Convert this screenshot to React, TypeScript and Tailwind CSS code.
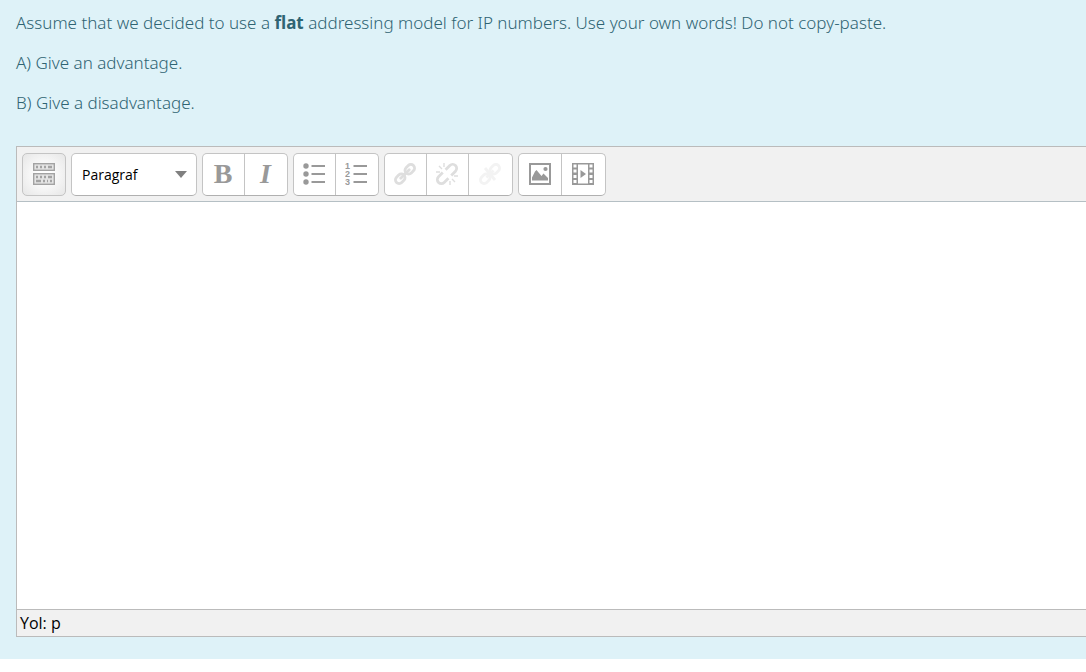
import type { ReactNode } from 'react';

interface ToolButtonProps {
  label: string;
  children: ReactNode;
  disabled?: boolean;
  wide?: boolean;
}

function ToolGroup({ children }: { children: ReactNode }) {
  return (
    <div className="flex h-[43px] overflow-hidden rounded-[5px] border border-[#c4c4c4] border-b-[#b0b0b0] bg-white">
      {children}
    </div>
  );
}

function ToolButton({ label, children, disabled, wide }: ToolButtonProps) {
  return (
    <button
      type="button"
      aria-label={label}
      title={label}
      disabled={disabled}
      className={`flex items-center justify-center border-r border-[#c4c4c4] pr-px pb-0.5 text-[#999] last:border-r-0 ${
        wide ? 'w-[43px]' : 'w-[42px]'
      }`}
    >
      {children}
    </button>
  );
}

function Icon({ children, className }: { children: ReactNode; className?: string }) {
  return (
    <svg
      width="24"
      height="24"
      viewBox="0 0 24 24"
      fill="none"
      stroke="currentColor"
      aria-hidden="true"
      className={className}
    >
      {children}
    </svg>
  );
}

function KeyboardIcon() {
  return (
    <Icon>
      <rect x="1.7" y="1.7" width="20.6" height="6.6" strokeWidth="1.4" fill="#e4e4e4" />
      <rect x="1.7" y="11.7" width="20.6" height="10.6" strokeWidth="1.4" fill="#e4e4e4" />
      <path d="M4 5h2M8 5h2M12 5h2M16 5h4" strokeWidth="2.4" />
      <path d="M4 15h2M8 15h2M12 15h2M16 15h4" strokeWidth="2.4" />
      <path d="M4 19h5M11 19h2M15 19h1M18 19h2" strokeWidth="2.4" />
    </Icon>
  );
}

function BulletListIcon() {
  return (
    <Icon>
      {[4, 12, 20].map((y) => (
        <g key={y}>
          <circle cx="4" cy={y} r="2.7" fill="currentColor" stroke="none" />
          <path d={`M9.5 ${y}h13.5`} strokeWidth="2.2" />
        </g>
      ))}
    </Icon>
  );
}

function NumberListIcon() {
  return (
    <Icon>
      {[4, 12, 20].map((y, i) => (
        <g key={y}>
          <text
            x="0"
            y={y + 3}
            fontSize="9"
            fontWeight="700"
            fontFamily="Liberation Sans, sans-serif"
            fill="currentColor"
            stroke="none"
          >
            {i + 1}
          </text>
          <path d={`M8.5 ${y}h13.5`} strokeWidth="2.2" />
        </g>
      ))}
    </Icon>
  );
}

function LinkIcon() {
  return (
    <Icon className="text-[#dedede]">
      <g transform="translate(12 12) rotate(-45)">
        <rect x="-12" y="-3.7" width="10.5" height="7.4" rx="3.7" strokeWidth="2.8" />
        <rect x="1.5" y="-3.7" width="10.5" height="7.4" rx="3.7" strokeWidth="2.8" />
        <path d="M-6 0h12" strokeWidth="2.8" strokeLinecap="round" />
      </g>
    </Icon>
  );
}

function UnlinkIcon() {
  return (
    <Icon className="text-[#dedede]">
      <g transform="translate(12 12) rotate(-45)">
        <path d="M-2 -4h-6a4 4 0 0 0 0 8h6" strokeWidth="2.8" />
        <path d="M2 -4h6a4 4 0 0 1 0 8h-6" strokeWidth="2.8" />
      </g>
      <path d="M9 1v4M4 4l3 3M1 10h4M15 23v-4M20 20l-3-3M23 14h-4" strokeWidth="1.4" />
    </Icon>
  );
}

function NoAutoLinkIcon() {
  return (
    <Icon className="text-[#f3f3f3]">
      <g transform="translate(12 12) rotate(-45)">
        <rect x="-12" y="-3.7" width="10.5" height="7.4" rx="3.7" strokeWidth="2.8" />
        <rect x="1.5" y="-3.7" width="10.5" height="7.4" rx="3.7" strokeWidth="2.8" />
        <path d="M-5 0h10" strokeWidth="2.8" />
      </g>
      <path d="M7 6l10 12" strokeWidth="2.8" />
    </Icon>
  );
}

function ImageIcon() {
  return (
    <Icon>
      <rect x="2" y="2" width="20" height="20" strokeWidth="2" />
      <circle cx="17.5" cy="7" r="2.1" fill="currentColor" stroke="none" />
      <path
        d="M4 18.5v-3l3-6 1.5-1.5 5 6 2-2.5 4.5 4.5v2.5z"
        fill="currentColor"
        stroke="none"
      />
    </Icon>
  );
}

function MediaIcon() {
  return (
    <Icon>
      <path
        fillRule="evenodd"
        fill="currentColor"
        stroke="none"
        d="M1 1h22v22h-22zM7 2.5h10v19h-10zM2.5 2.5h3v3h-3zM2.5 7.5h3v3h-3zM2.5 13h3v3h-3zM2.5 18h3v3h-3zM18.5 2.5h3v3h-3zM18.5 7.5h3v3h-3zM18.5 13h3v3h-3zM18.5 18h3v3h-3z"
      />
      <path d="M9.5 8v8l5.5-4z" fill="currentColor" stroke="none" />
    </Icon>
  );
}

function Toolbar() {
  return (
    <div
      role="toolbar"
      aria-label="Editor"
      className="flex flex-wrap gap-[5px] border-b border-[#b5bfc4] bg-[#f1f1f1] px-[5px] pt-1.5 pb-[5px]"
    >
      <button
        type="button"
        aria-label="Toolbar"
        aria-pressed="true"
        className="flex h-[43px] w-11 items-center justify-center rounded-[5px] border border-[#c4c4c4] bg-[radial-gradient(#fff_20%,#e6e6e6)] pb-0.5 text-[#a3a3a3]"
      >
        <KeyboardIcon />
      </button>

      <div className="relative h-[43px] w-[126px]">
        <select
          aria-label="Format"
          defaultValue="p"
          className="h-full w-full appearance-none rounded-[5px] border border-[#c4c4c4] border-b-[#b0b0b0] bg-white pl-2.5 text-sm text-black"
        >
          <option value="p">Paragraf</option>
        </select>
        <svg
          width="12"
          height="7"
          viewBox="0 0 12 7"
          aria-hidden="true"
          className="pointer-events-none absolute top-[18px] right-2.5 fill-[#808080]"
        >
          <path d="M0 0h12L6 7z" />
        </svg>
      </div>

      <ToolGroup>
        <ToolButton label="Bold">
          <span className="font-['Liberation_Serif',serif] text-[28px] leading-7 font-bold">B</span>
        </ToolButton>
        <ToolButton label="Italic">
          <span className="font-['Liberation_Serif',serif] text-[28px] leading-7 font-bold italic">I</span>
        </ToolButton>
      </ToolGroup>

      <ToolGroup>
        <ToolButton label="Bulleted list">
          <BulletListIcon />
        </ToolButton>
        <ToolButton label="Numbered list">
          <NumberListIcon />
        </ToolButton>
      </ToolGroup>

      <ToolGroup>
        <ToolButton label="Link" disabled>
          <LinkIcon />
        </ToolButton>
        <ToolButton label="Unlink" disabled>
          <UnlinkIcon />
        </ToolButton>
        <ToolButton label="Prevent automatic linking" disabled wide>
          <NoAutoLinkIcon />
        </ToolButton>
      </ToolGroup>

      <ToolGroup>
        <ToolButton label="Image" wide>
          <ImageIcon />
        </ToolButton>
        <ToolButton label="Media" wide>
          <MediaIcon />
        </ToolButton>
      </ToolGroup>
    </div>
  );
}

export default function App() {
  return (
    <div className="min-h-screen bg-white font-['Open_Sans','Noto_Sans',sans-serif]">
      <main className="bg-[#def2f8] pt-[11px] pb-[22px] pl-4">
        <div className="flex flex-col gap-4 font-['Noto_Sans',sans-serif] text-[17px] leading-6 font-light text-[#2f6473]">
          <p>
            Assume that we decided to use a <strong className="font-bold">flat</strong> addressing
            model for IP numbers. Use your own words! Do not copy-paste.
          </p>
          <p>A) Give an advantage.</p>
          <p>B) Give a disadvantage.</p>
        </div>

        <div className="mt-[31px] border-y border-l border-[#bbb]">
          <Toolbar />
          <textarea
            aria-label="Answer"
            rows={17}
            className="block w-full resize-none bg-white p-2 text-base leading-[23px] text-black outline-none"
          />
          <div className="border-t border-[#bbb] bg-[#f1f1f1] px-[3px] text-base leading-[26px] text-black">
            Yol: p
          </div>
        </div>
      </main>
    </div>
  );
}
